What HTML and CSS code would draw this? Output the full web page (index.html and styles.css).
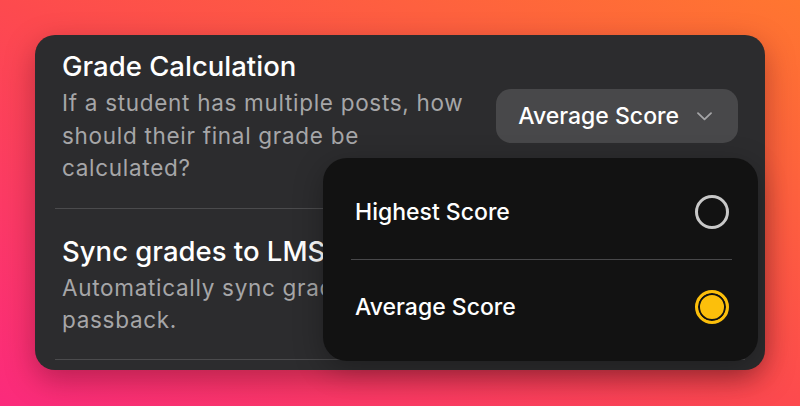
FILE: index.html
```html
<!DOCTYPE html>
<html lang="en">
<head>
<meta charset="utf-8">
<title>Grade settings</title>
<link rel="stylesheet" href="styles.css">
</head>
<body>
<div class="stage">
  <div class="card">
    <div class="row row-first">
      <div class="text">
        <div class="title">Grade Calculation</div>
        <div class="desc">If a student has multiple posts, how should their final grade be calculated?</div>
      </div>
      <button class="select" type="button">
        <span>Average Score</span>
        <svg class="chev" width="15" height="9" viewBox="0 0 15 9"><path d="M1 1.2 L7.5 7.4 L14 1.2" fill="none" stroke="#a5a5a7" stroke-width="1.8" stroke-linecap="round" stroke-linejoin="round"/></svg>
      </button>
    </div>
    <div class="row row-second">
      <div class="text">
        <div class="title">Sync grades to LMS</div>
        <div class="desc">Automatically sync grades to your LMS via grade passback.</div>
      </div>
      <span class="toggle"></span>
    </div>
  </div>
  <div class="menu">
    <div class="item">
      <span>Highest Score</span>
      <span class="radio"></span>
    </div>
    <div class="item">
      <span>Average Score</span>
      <span class="radio on"></span>
    </div>
  </div>
</div>
</body>
</html>
```
FILE: styles.css
```css
html, body {
  margin: 0;
  height: 100%;
}
body {
  background: linear-gradient(to top right, #fb2a7c 0%, #fd4a4e 50%, #ff7630 100%);
  font-family: Inter, "Noto Sans", sans-serif;
  overflow: hidden;
}
.stage {
  position: relative;
  padding: 35px;
  height: 406px;
  box-sizing: border-box;
}
.card {
  background: #2c2c2e;
  border-radius: 20px;
  height: 335px;
  overflow: hidden;
  padding: 0 20px;
  box-shadow: 0 10px 30px rgba(60, 0, 20, 0.35);
}
.row {
  display: flex;
  align-items: center;
  gap: 28px;
  padding: 0 7px;
  border-bottom: 1px solid #4b4b4d;
}
.row-first {
  padding-top: 15px;
  padding-bottom: 23px;
}
.row-second {
  padding-top: 26px;
  padding-bottom: 22px;
}
.text {
  flex: 1;
  min-width: 0;
}
.title {
  color: #ffffff;
  font-size: 27.5px;
  line-height: 32px;
  font-weight: 500;
  margin-bottom: 5px;
}
.desc {
  color: #a6a6a8;
  font-size: 22.5px;
  line-height: 32.5px;
  letter-spacing: 0.7px;
}
.select {
  display: flex;
  align-items: center;
  gap: 18px;
  height: 54px;
  padding: 0 26px 0 22px;
  background: #48484a;
  border: none;
  border-radius: 15px;
  color: #ffffff;
  font-family: inherit;
  font-size: 23px;
  font-weight: 500;
  margin-bottom: 2px;
}
.chev {
  display: block;
}
.toggle {
  width: 51px;
  height: 31px;
  border-radius: 16px;
  background: #39393d;
}
.menu {
  position: absolute;
  left: 323px;
  top: 158px;
  width: 435px;
  box-sizing: border-box;
  padding: 7px 26px 7px 28px;
  background: #121212;
  border-radius: 24px;
  box-shadow: 0 8px 30px rgba(0, 0, 0, 0.3);
}
.item {
  display: flex;
  align-items: center;
  justify-content: space-between;
  height: 94px;
  padding: 0 3px 0 4px;
  color: #ffffff;
  font-size: 23px;
  font-weight: 500;
}
.item + .item {
  border-top: 1px solid #48484a;
}
.radio {
  width: 34px;
  height: 34px;
  box-sizing: border-box;
  border-radius: 50%;
  border: 3px solid #c8c8c8;
}
.radio.on {
  border-color: #fcbf0b;
  background: #fcbf0b;
  box-shadow: inset 0 0 0 2px #121212;
}
```
